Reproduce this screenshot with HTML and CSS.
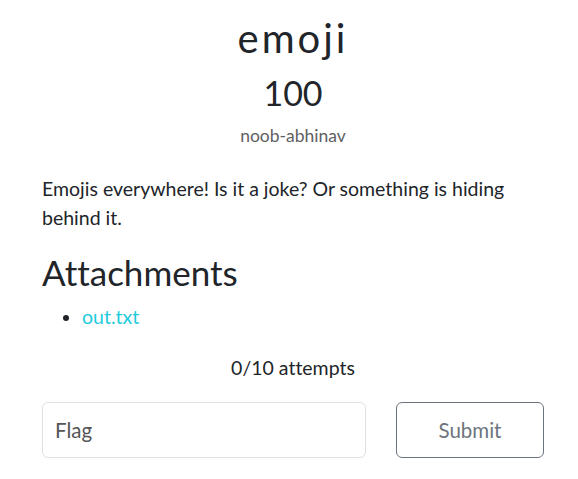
FILE: index.html
```html
<!DOCTYPE html>
<html lang="en">
<head>
  <meta charset="UTF-8">
  <meta name="viewport" content="width=device-width, initial-scale=1.0">
  <title>emoji</title>
  <link rel="stylesheet" href="styles.css">
</head>
<body>

<div class="challenge">
  <h2 class="challenge-name">emoji</h2>
  <h3 class="challenge-value">100</h3>
  <div class="challenge-author">noob-abhinav</div>

  <p class="challenge-desc">Emojis everywhere! Is it a joke? Or something is hiding behind it.</p>

  <h3 class="section-title">Attachments</h3>
  <ul class="files">
    <li><a href="#">out.txt</a></li>
  </ul>

  <p class="attempts">0/10 attempts</p>

  <form class="submit-row">
    <input class="flag-input" type="text" placeholder="Flag">
    <button class="submit-btn" type="button">Submit</button>
  </form>
</div>

</body>
</html>
```

FILE: styles.css
```css
body {
  margin: 0;
  font-family: Lato, "Open Sans", sans-serif;
  font-variant-ligatures: none;
  color: #212529;
  background: #fff;
}

.challenge {
  width: 502px;
  margin: 0 auto;
  padding: 14px 34px 0 42px;
}

.challenge-name {
  margin: 0;
  text-align: center;
  font-size: 40px;
  font-weight: 400;
  letter-spacing: 3px;
  line-height: 1.2;
}

.challenge-value {
  margin: 11px 0 0;
  text-align: center;
  font-size: 34px;
  font-weight: 400;
  line-height: 1.2;
}

.challenge-author {
  margin-top: 11px;
  text-align: center;
  font-size: 17.5px;
  color: #606060;
}

.challenge-desc {
  margin: 28px 0 0;
  font-size: 19.5px;
  line-height: 29px;
}

.section-title {
  margin: 19px 0 0;
  font-size: 35px;
  font-weight: 400;
  line-height: 1.2;
}

.files {
  margin: 10px 0 0;
  padding-left: 40px;
  font-size: 19.5px;
  line-height: 28px;
}

.files a {
  color: #1dcbdb;
  text-decoration: none;
}

.attempts {
  margin: 25px 0 0;
  text-align: center;
  font-size: 19.5px;
}

.submit-row {
  display: grid;
  grid-template-columns: 324px 148px;
  justify-content: space-between;
  margin-top: 23px;
}

.flag-input {
  height: 56px;
  box-sizing: border-box;
  padding: 0 12px;
  border: 1px solid #dee2e6;
  border-radius: 6px;
  font-family: inherit;
  font-size: 20.5px;
  color: #495057;
}

.flag-input::placeholder {
  color: #555;
}

.submit-btn {
  height: 56px;
  border: 1px solid #6c757d;
  border-radius: 6px;
  background: #fff;
  font-family: inherit;
  font-size: 20.5px;
  color: #6c757d;
}
```
